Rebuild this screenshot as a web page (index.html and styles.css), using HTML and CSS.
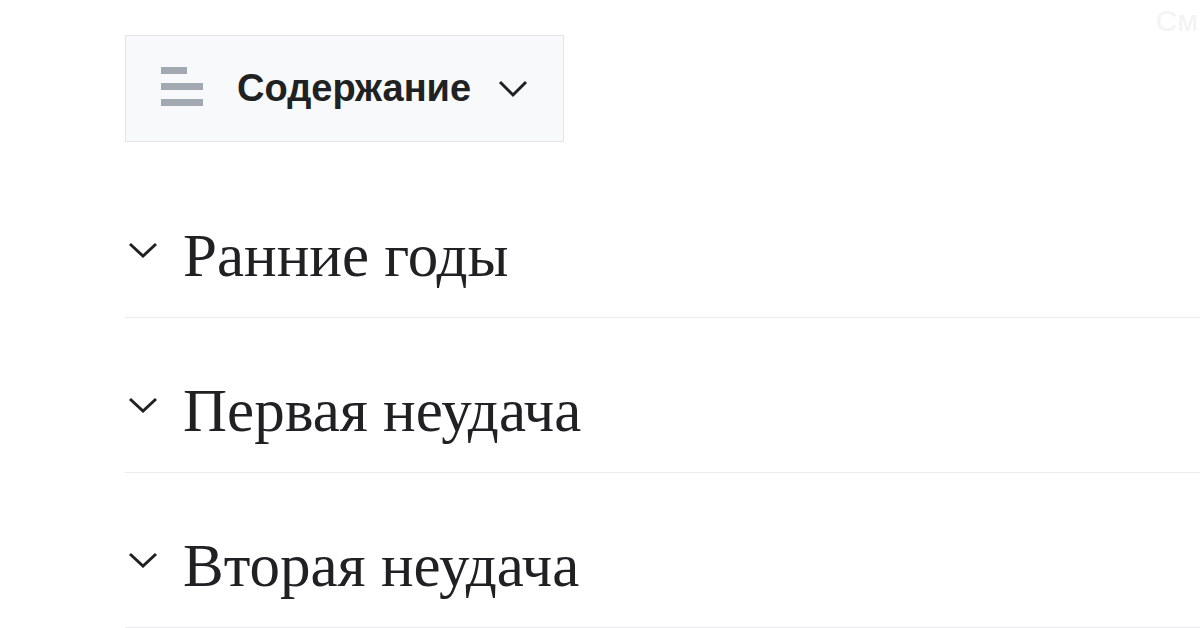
FILE: index.html
```html
<!DOCTYPE html>
<html lang="ru">
<head>
    <meta charset="UTF-8">
    <meta name="viewport" content="width=device-width, initial-scale=1.0">
    <title>Содержание</title>
    <link rel="stylesheet" href="styles.css">
</head>
<body>
<div class="topbar">
    <span class="faint">См</span>
</div>
<div class="page">
    <button class="toc-btn">
        <span class="toc-icon">
            <span class="bar short"></span>
            <span class="bar"></span>
            <span class="bar"></span>
        </span>
        <span class="toc-label">Содержание</span>
        <svg class="toc-chevron" width="30" height="18" viewBox="0 0 30 18">
            <path d="M2 2 L15 15 L28 2" fill="none" stroke="#202122" stroke-width="3"/>
        </svg>
    </button>

    <div class="sections">
        <div class="section">
            <svg class="sec-chevron" width="30" height="16" viewBox="0 0 30 16">
                <path d="M2 2 L15 14 L28 2" fill="none" stroke="#202122" stroke-width="3"/>
            </svg>
            <h2>Ранние годы</h2>
        </div>
        <div class="section">
            <svg class="sec-chevron" width="30" height="16" viewBox="0 0 30 16">
                <path d="M2 2 L15 14 L28 2" fill="none" stroke="#202122" stroke-width="3"/>
            </svg>
            <h2>Первая неудача</h2>
        </div>
        <div class="section">
            <svg class="sec-chevron" width="30" height="16" viewBox="0 0 30 16">
                <path d="M2 2 L15 14 L28 2" fill="none" stroke="#202122" stroke-width="3"/>
            </svg>
            <h2>Вторая неудача</h2>
        </div>
    </div>
</div>
</body>
</html>
```

FILE: styles.css
```css
body {
    margin: 0;
    padding: 0;
    background-color: #ffffff;
    color: #202122;
    font-family: "Liberation Sans", Arial, sans-serif;
    overflow: hidden;
}

.topbar {
    display: flex;
    justify-content: flex-end;
    height: 35px;
    padding-right: 2px;
}

.faint {
    font-size: 30px;
    line-height: 42px;
    color: #f3f3f3;
}

.page {
    padding-left: 125px;
}

.toc-btn {
    display: inline-flex;
    align-items: center;
    height: 107px;
    padding: 0 35px;
    background-color: #f8f9fa;
    border: 1px solid #e3e5e8;
    font-family: inherit;
    cursor: pointer;
}

.toc-icon {
    display: flex;
    flex-direction: column;
    gap: 9px;
    width: 42px;
    margin-right: 34px;
    margin-bottom: 5px;
}

.toc-icon .bar {
    display: block;
    height: 7px;
    background-color: #a2a9b1;
}

.toc-icon .bar.short {
    width: 26px;
}

.toc-label {
    font-size: 38px;
    font-weight: bold;
    color: #202122;
    margin-right: 27px;
}

.sections {
    margin-top: 21px;
}

.section {
    display: flex;
    align-items: center;
    padding: 56px 0 24px 3px;
    border-bottom: 1px solid #eaecf0;
}

.sec-chevron {
    margin-right: 25px;
    margin-bottom: 12px;
}

.section h2 {
    margin: 0;
    font-family: "Liberation Serif", "Times New Roman", serif;
    font-weight: normal;
    font-size: 61px;
    line-height: 74px;
    color: #202122;
}
```
